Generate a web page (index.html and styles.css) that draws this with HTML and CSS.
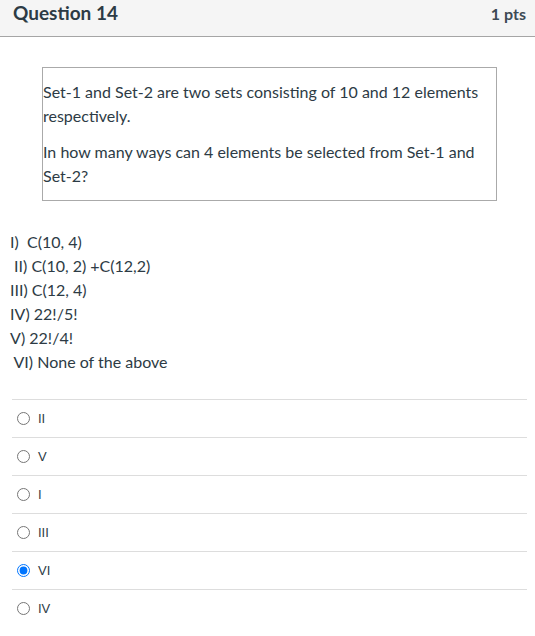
FILE: index.html
```html
<!DOCTYPE html>
<html>
<head>
<meta charset="utf-8">
<link rel="stylesheet" href="styles.css">
</head>
<body>
<div class="header">
  <span class="title">Question 14</span>
  <span class="pts">1 pts</span>
</div>
<div class="content">
  <div class="qbox">
    <p>Set-1 and Set-2 are two sets consisting of 10 and 12 elements respectively.</p>
    <p>In how many ways can 4 elements be selected from Set-1 and Set-2?</p>
  </div>
  <div class="choices">
    <div>I)&nbsp; C(10, 4)</div>
    <div>&nbsp;II) C(10, 2) +C(12,2)</div>
    <div>III) C(12, 4)</div>
    <div>IV) 22!/5!</div>
    <div>V) 22!/4!</div>
    <div>&nbsp;VI) None of the above</div>
  </div>
</div>
<div class="answers">
  <label class="answer"><input type="radio" name="a"><span>II</span></label>
  <label class="answer"><input type="radio" name="a"><span>V</span></label>
  <label class="answer"><input type="radio" name="a"><span>I</span></label>
  <label class="answer"><input type="radio" name="a"><span>III</span></label>
  <label class="answer"><input type="radio" name="a" checked><span>VI</span></label>
  <label class="answer"><input type="radio" name="a"><span>IV</span></label>
</div>
</body>
</html>
```
FILE: styles.css
```css
html, body {
  margin: 0;
  padding: 0;
  background: #fff;
}
body {
  font-family: Lato, "Open Sans", sans-serif;
  color: #2d3b45;
}
.header {
  height: 36px;
  background: #f5f5f5;
  border-bottom: 1px solid #a5a5a5;
  display: flex;
  align-items: center;
  justify-content: space-between;
  padding: 0 9px 0 13px;
  box-sizing: content-box;
}
.title {
  font-weight: 700;
  font-size: 19px;
  margin-top: -12px;
}
.pts {
  font-weight: 700;
  font-size: 16px;
  color: #3d4a54;
  margin-top: -10px;
}
.content {
  padding: 30px 0 0 0;
  font-size: 16px;
  line-height: 24px;
}
.qbox {
  margin-left: 42px;
  width: 453px;
  border: 1px solid #aaa;
  padding: 12px 0 12px 0;
}
.qbox p {
  margin: 0 0 12px 0;
}
.qbox p:last-child {
  margin-bottom: 0;
}
.choices {
  margin: 29px 0 0 10px;
}
.answers {
  margin: 25px 8px 0 12px;
}
.answer {
  display: flex;
  align-items: center;
  height: 37px;
  border-top: 1px solid #ddd;
  font-family: "Liberation Sans", Arial, sans-serif;
  font-size: 13px;
  color: #2d3b45;
}
.answer input {
  margin: 0 8px 0 5px;
  width: 13px;
  height: 13px;
}
```
